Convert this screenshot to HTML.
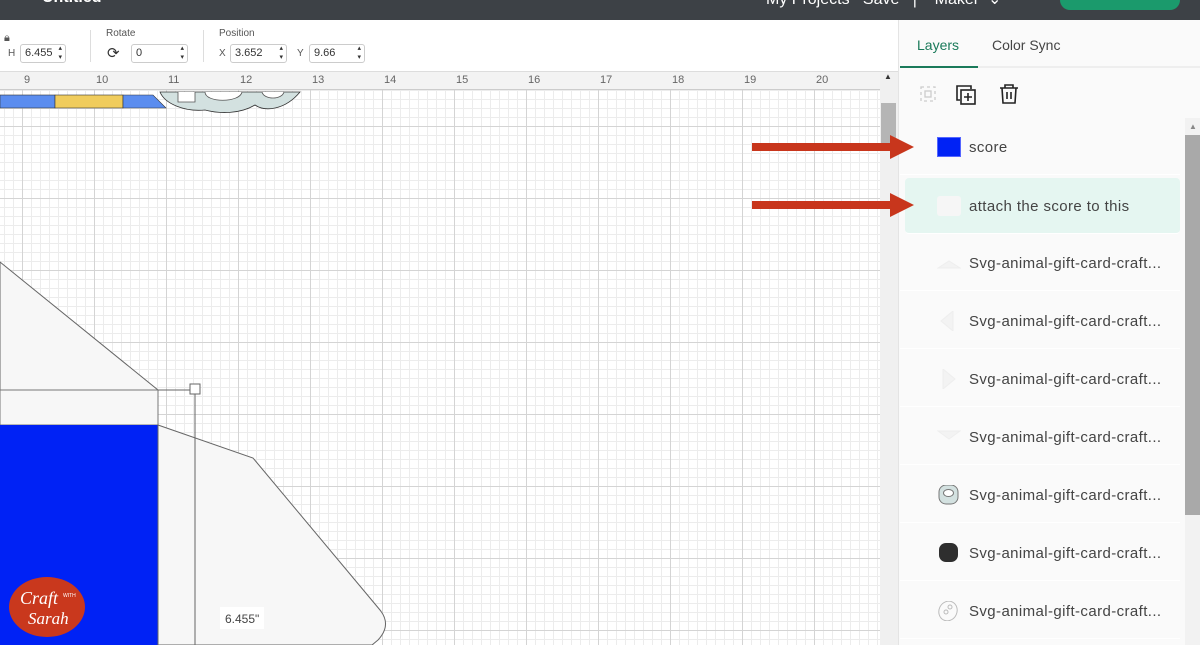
<!DOCTYPE html>
<html><head><meta charset="utf-8"><style>
*{margin:0;padding:0;box-sizing:border-box}
body{width:1200px;height:645px;overflow:hidden;position:relative;font-family:"Liberation Sans",sans-serif;background:#fff;color:#333}
.abs{position:absolute}
.hdr{left:0;top:0;width:1200px;height:20px;background:#3d4146;overflow:hidden;color:#fff;font-size:16px;font-weight:bold}
.tb{left:0;top:20px;width:898px;height:52px;background:#fff;border-bottom:1px solid #ddd}
.inp{position:absolute;height:19px;border:1px solid #ccc;border-radius:3px;font-size:11px;padding:2px 4px;background:#fff}
.inp:after{content:"▴\A▾";white-space:pre;position:absolute;right:3px;top:-1px;font-size:7px;line-height:9px;color:#333}
.lbl{position:absolute;font-size:10px;color:#555}
.canvas{left:0;top:72px;width:880px;height:573px;background-color:#fff;
background-image:linear-gradient(to right,#d4d4d4 1px,transparent 1px),linear-gradient(to bottom,#d4d4d4 1px,transparent 1px),linear-gradient(to right,#ececec 1px,transparent 1px),linear-gradient(to bottom,#ececec 1px,transparent 1px);
background-size:72px 72px,72px 72px,9px 9px,9px 9px;background-position:22px 54px,22px 54px,4px 0,4px 0}
.ruler{left:0;top:72px;width:880px;height:18px;background:#f3f3f3;border-bottom:1px solid #ccc;font-size:11px;color:#666}
.panel{left:898px;top:20px;width:302px;height:625px;background:#fafafa;border-left:1px solid #e4e4e4}
.row{position:absolute;left:900px;width:280px;height:56px;border-bottom:1px solid #fff;font-size:15px;color:#444;letter-spacing:0.4px}
.row span{position:absolute;left:69px;top:20px}
.sw{position:absolute;left:37px;top:18px;width:24px;height:20px}
</style></head><body>
<div class="abs hdr"><span class="abs" style="left:42px;top:-11px">Untitled</span><span class="abs" style="left:766px;top:-11px;font-weight:normal">My Projects &nbsp; Save &nbsp; | &nbsp;&nbsp; Maker &nbsp;⌄</span></div>
<div class="abs" style="left:1060px;top:0;width:120px;height:10px;background:#1b9a6c;border-radius:0 0 10px 10px"></div>
<div class="abs tb">
 <div class="lbl" style="left:4px;top:12px;font-size:11px">🔒︎</div>
 <div class="lbl" style="left:8px;top:28px">H</div>
 <div class="inp" style="left:20px;top:24px;width:46px">6.455</div>
 <div class="abs" style="left:90px;top:10px;width:1px;height:32px;background:#ddd"></div>
 <div class="lbl" style="left:106px;top:8px">Rotate</div>
 <div class="lbl" style="left:107px;top:24px;font-size:15px;color:#333">⟳</div>
 <div class="inp" style="left:131px;top:24px;width:57px">0</div>
 <div class="abs" style="left:203px;top:10px;width:1px;height:32px;background:#ddd"></div>
 <div class="lbl" style="left:219px;top:8px">Position</div>
 <div class="lbl" style="left:219px;top:28px">X</div>
 <div class="inp" style="left:230px;top:24px;width:57px">3.652</div>
 <div class="lbl" style="left:297px;top:28px">Y</div>
 <div class="inp" style="left:309px;top:24px;width:56px">9.66</div>
</div>
<div class="abs canvas"></div>
<div class="abs ruler">
 <span class="abs" style="left:24px;top:2px">9</span><span class="abs" style="left:96px;top:2px">10</span><span class="abs" style="left:168px;top:2px">11</span><span class="abs" style="left:240px;top:2px">12</span><span class="abs" style="left:312px;top:2px">13</span><span class="abs" style="left:384px;top:2px">14</span><span class="abs" style="left:456px;top:2px">15</span><span class="abs" style="left:528px;top:2px">16</span><span class="abs" style="left:600px;top:2px">17</span><span class="abs" style="left:672px;top:2px">18</span><span class="abs" style="left:744px;top:2px">19</span><span class="abs" style="left:816px;top:2px">20</span>
</div>
<svg class="abs" style="left:0;top:72px" width="880" height="573" viewBox="0 72 880 573">
 <rect x="0" y="95" width="55" height="13" fill="#5b8def" stroke="#333" stroke-width=".6"/>
 <rect x="55" y="95" width="68" height="13" fill="#f0cc5c" stroke="#333" stroke-width=".6"/>
 <path d="M123 95H153L166 108H123Z" fill="#5b8def" stroke="#333" stroke-width=".6"/>
 <path d="M160 92C165 104 185 112 205 110C220 114 240 114 255 105C265 112 285 110 300 92Z" fill="#d3e1e0" stroke="#333" stroke-width=".8"/>
 <path d="M178 92V102H195V92M205 92C205 103 240 103 242 92M262 92C264 100 282 100 284 92" fill="#fff" stroke="#555" stroke-width=".8"/>
 <path d="M0 262L158 390H0Z" fill="#f7f7f7" stroke="#666" stroke-width="1"/>
 <rect x="0" y="390" width="158" height="35" fill="#f7f7f7" stroke="#777" stroke-width="1"/>
 <rect x="0" y="425" width="158" height="220" fill="#0022f5"/>
 <path d="M158 425L253 458L380 610Q392 625 378 640L372 645H158Z" fill="#f7f7f7" stroke="#666" stroke-width="1"/>
 <line x1="158" y1="390" x2="190" y2="390" stroke="#666"/>
 <rect x="190" y="384" width="10" height="10" fill="#fff" stroke="#666"/>
 <line x1="195" y1="394" x2="195" y2="645" stroke="#666"/>
 <rect x="220" y="607" width="44" height="22" fill="#fff"/>
 <text x="225" y="623" font-size="12" fill="#444" font-family="Liberation Sans">6.455"</text>
 <ellipse cx="47" cy="607" rx="38" ry="30" fill="#c9381d"/>
 <text x="20" y="604" font-size="18" font-style="italic" fill="#fff" font-family="Liberation Serif">Craft</text>
 <text x="63" y="597" font-size="5" fill="#fff">WITH</text>
 <text x="28" y="624" font-size="17" font-style="italic" fill="#fff" font-family="Liberation Serif">Sarah</text>
</svg>
<div class="abs" style="left:880px;top:72px;width:18px;height:573px;background:#f0f0f0"></div>
<div class="abs" style="left:884px;top:72px;font-size:8px;color:#333">▲</div>
<div class="abs" style="left:881px;top:103px;width:15px;height:40px;background:#b5b5b5"></div>
<div class="abs panel"></div>
<div class="abs" style="left:917px;top:37px;font-size:14px;color:#1a7a5a">Layers</div>
<div class="abs" style="left:992px;top:37px;font-size:14px;color:#444">Color Sync</div>
<div class="abs" style="left:900px;top:66px;width:300px;height:2px;background:#eee"></div>
<div class="abs" style="left:900px;top:66px;width:78px;height:2px;background:#1a7a5a"></div>
<svg class="abs" style="left:915px;top:82px" width="110" height="24">
 <g fill="none" stroke="#ccc" stroke-width="1.3"><rect x="6" y="5" width="14" height="14" stroke-dasharray="3 3"/><rect x="10" y="9" width="6" height="6"/></g>
 <g fill="none" stroke="#222" stroke-width="1.6"><path d="M45 18H42V4H56V7"/><rect x="46" y="8" width="14" height="14"/><path d="M53 11V19M49 15H57"/></g>
 <g fill="none" stroke="#222" stroke-width="1.6"><path d="M85 6H103M90 6V3H98V6M87 6L88 21H100L101 6M92 10V17M96 10V17"/></g>
</svg>
<div class="abs" style="left:1185px;top:118px;width:15px;height:527px;background:#f2f2f2"></div>
<div class="abs" style="left:1189px;top:122px;font-size:8px;color:#888">▲</div>
<div class="abs" style="left:1185px;top:135px;width:15px;height:380px;background:#a9a9a9"></div>

<div class="row" style="top:119px"><div class="sw" style="background:#0022f5;border:1px solid #5566ff"></div><span>score</span></div>
<div class="row" style="top:178px;left:905px;width:275px;background:#e5f6f1;border-radius:4px"><div class="sw" style="left:32px;background:#f6f6f6;border-radius:3px"></div><span style="left:64px">attach the score to this</span></div>
<div class="row" style="top:235px"><svg class="sw" viewBox="0 0 24 20"><path d="M1 15L12 8L23 15Z" fill="#f3f3f3" stroke="#eee"/></svg><span>Svg-animal-gift-card-craft...</span></div>
<div class="row" style="top:293px"><svg class="sw" viewBox="0 0 24 20"><path d="M16 0L4 10L16 20Z" fill="#f3f3f3" stroke="#eee"/></svg><span>Svg-animal-gift-card-craft...</span></div>
<div class="row" style="top:351px"><svg class="sw" viewBox="0 0 24 20"><path d="M6 0L18 10L6 20Z" fill="#f3f3f3" stroke="#eee"/></svg><span>Svg-animal-gift-card-craft...</span></div>
<div class="row" style="top:409px"><svg class="sw" viewBox="0 0 24 20"><path d="M1 4L12 12L23 4Z" fill="#f3f3f3" stroke="#eee"/></svg><span>Svg-animal-gift-card-craft...</span></div>
<div class="row" style="top:467px"><svg class="sw" viewBox="0 0 24 20"><rect x="2" y="0" width="19" height="19" rx="7" fill="#d3e1e0" stroke="#777"/><ellipse cx="11.5" cy="8" rx="5" ry="3.5" fill="#fff" stroke="#777"/></svg><span>Svg-animal-gift-card-craft...</span></div>
<div class="row" style="top:525px"><svg class="sw" viewBox="0 0 24 20"><rect x="2" y="0" width="19" height="19" rx="7" fill="#2e2e2e"/></svg><span>Svg-animal-gift-card-craft...</span></div>
<div class="row" style="top:583px"><svg class="sw" viewBox="0 0 24 20"><ellipse cx="11" cy="10" rx="9" ry="10" transform="rotate(25 11 10)" fill="none" stroke="#bbb"/><circle cx="13" cy="6" r="2" fill="none" stroke="#bbb"/><circle cx="9" cy="11" r="2" fill="none" stroke="#bbb"/></svg><span>Svg-animal-gift-card-craft...</span></div>

<svg class="abs" style="left:750px;top:130px" width="170" height="95">
 <path d="M2 13H140V5L164 17L140 29V21H2Z" fill="#c8361c"/>
 <path d="M2 71H140V63L164 75L140 87V79H2Z" fill="#c8361c"/>
</svg>
</body></html>
